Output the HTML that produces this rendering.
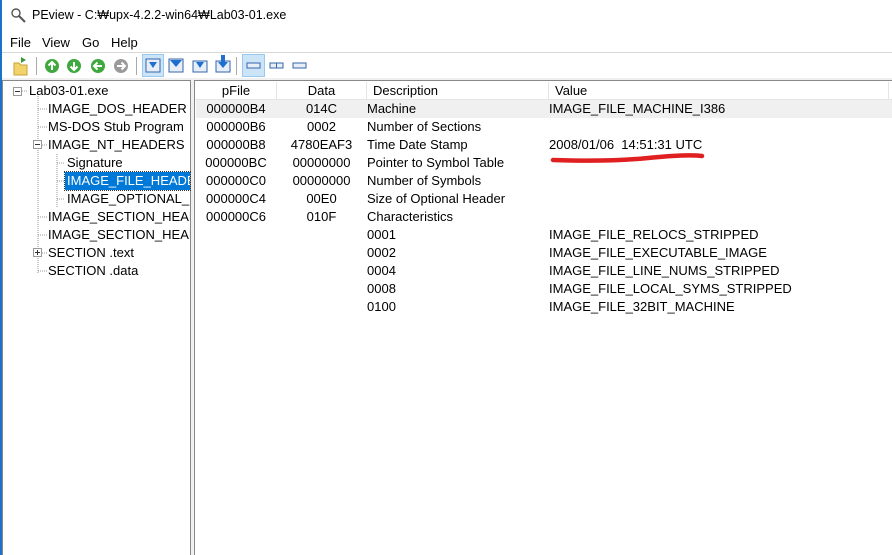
<!DOCTYPE html>
<html><head><meta charset="utf-8"><style>
*{margin:0;padding:0;box-sizing:border-box}
body{width:892px;height:555px;overflow:hidden;background:#fff;font-family:"Liberation Sans","Noto Sans CJK KR",sans-serif;font-size:13px;color:#000;position:relative}
.a{position:absolute;white-space:nowrap}
.t{line-height:18px;height:18px}
</style></head><body>
<div class="a" style="left:0;top:0;width:2px;height:555px;background:#1a73c8"></div>
<svg class="a" style="left:10px;top:7px" width="18" height="18" viewBox="0 0 18 18"><circle cx="6" cy="6" r="4" fill="none" stroke="#555" stroke-width="1.4"/><path d="M9 9l6 6" stroke="#555" stroke-width="2"/></svg>
<div class="a" style="left:32px;top:8px;font-size:12.5px">PEview - C:₩upx-4.2.2-win64₩Lab03-01.exe</div>
<div class="a" style="left:10px;top:35px">File</div>
<div class="a" style="left:42px;top:35px">View</div>
<div class="a" style="left:82px;top:35px">Go</div>
<div class="a" style="left:111px;top:35px">Help</div>
<div class="a" style="left:2px;top:52px;width:890px;height:1px;background:#d8d8d8"></div>
<svg class="a" style="left:0;top:53px" width="320" height="26">
<path d="M14 10h5l2 2h6v10h-13z" fill="#f2d36b" stroke="#c9a23b"/><path d="M21 4l5 3-5 3" fill="#3a9a3a"/>
<rect x="36" y="4" width="1" height="18" fill="#aaa"/>
<circle cx="52" cy="13" r="7" fill="#3fa83f"/><path d="M52 9v8M48.5 12.5L52 9l3.5 3.5" stroke="#fff" stroke-width="2" fill="none"/>
<circle cx="74" cy="13" r="7" fill="#3fa83f"/><path d="M74 9v8M70.5 13.5L74 17l3.5-3.5" stroke="#fff" stroke-width="2" fill="none"/>
<circle cx="98" cy="13" r="7" fill="#3fa83f"/><path d="M94 13h8M97.5 9.5L94 13l3.5 3.5" stroke="#fff" stroke-width="2" fill="none"/>
<circle cx="121" cy="13" r="7" fill="#9a9a9a"/><path d="M117 13h8M121.5 9.5L125 13l-3.5 3.5" stroke="#fff" stroke-width="2" fill="none"/>
<rect x="136" y="4" width="1" height="18" fill="#aaa"/>
<rect x="142.5" y="1.5" width="21" height="22" fill="#cce4f7" stroke="#99c9ef"/>
<rect x="146" y="6" width="14" height="13" fill="#e8eef8" stroke="#3366aa"/><path d="M149 9h8l-4 6z" fill="#1e6fd0"/>
<rect x="169" y="6" width="14" height="13" fill="#e8eef8" stroke="#3366aa"/><path d="M170 7h12l-6 7z" fill="#1e6fd0"/>
<rect x="193" y="8" width="14" height="11" fill="#e8eef8" stroke="#3366aa"/><path d="M196 9h8l-4 6z" fill="#1e6fd0"/>
<rect x="216" y="8" width="14" height="11" fill="#e8eef8" stroke="#3366aa"/><path d="M221 2h4v7h3l-5 6-5-6h3z" fill="#1e6fd0"/>
<rect x="236" y="4" width="1" height="18" fill="#aaa"/>
<rect x="242.5" y="1.5" width="22" height="22" fill="#cce4f7" stroke="#99c9ef"/>
<rect x="247" y="10" width="13" height="5" fill="#e8eef8" stroke="#3366aa"/>
<rect x="270" y="10" width="13" height="5" fill="#e8eef8" stroke="#3366aa"/><rect x="276" y="10" width="1" height="5" fill="#3366aa"/>
<rect x="293" y="10" width="13" height="5" fill="#e8eef8" stroke="#3366aa"/>
</svg>
<div class="a" style="left:2px;top:78px;width:890px;height:2px;background:#f0f0f0"></div>
<div class="a" style="left:2px;top:80px;width:188px;height:475px;border-left:1px solid #888;border-top:1px solid #888"></div>
<div class="a" style="left:190px;top:80px;width:1px;height:475px;background:#888"></div>
<div class="a" style="left:191px;top:80px;width:3px;height:475px;background:#f0f0f0"></div>
<div class="a" style="left:194px;top:80px;width:1px;height:475px;background:#888"></div>
<svg class="a" style="left:0;top:82px" width="190" height="200">
<g stroke="#999" stroke-dasharray="1,1"><path d="M20 9h8M38 12v180M38 27h9M38 45h9M38 63h9M38 135h9M38 153h9M38 171h9M38 189h9M57 72v54M57 81h8M57 99h8M57 117h8"/></g>
<rect x="13.5" y="5.5" width="8" height="8" fill="#fff" stroke="#999"/><path d="M15 9.5h5" stroke="#333"/>
<rect x="33.5" y="58.5" width="8" height="8" fill="#fff" stroke="#999"/><path d="M35 62.5h5" stroke="#333"/>
<rect x="33.5" y="166.5" width="8" height="8" fill="#fff" stroke="#999"/><path d="M35 170.5h5M37.5 168v5" stroke="#333"/>
</svg>
<div class="a t" style="left:29px;top:82px">Lab03-01.exe</div>
<div class="a t" style="left:48px;top:100px">IMAGE_DOS_HEADER</div>
<div class="a t" style="left:48px;top:118px">MS-DOS Stub Program</div>
<div class="a t" style="left:48px;top:136px">IMAGE_NT_HEADERS</div>
<div class="a t" style="left:67px;top:154px">Signature</div>
<div class="a t" style="left:65px;top:172px;width:125px;overflow:hidden;background:#0078d7;color:#fff;padding-left:2px;outline:1px dotted #333">IMAGE_FILE_HEADER</div>
<div class="a t" style="left:67px;top:190px;width:123px;overflow:hidden">IMAGE_OPTIONAL_HEADER</div>
<div class="a t" style="left:48px;top:208px;width:142px;overflow:hidden">IMAGE_SECTION_HEADER</div>
<div class="a t" style="left:48px;top:226px;width:142px;overflow:hidden">IMAGE_SECTION_HEADER</div>
<div class="a t" style="left:48px;top:244px">SECTION .text</div>
<div class="a t" style="left:48px;top:262px">SECTION .data</div>
<div class="a" style="left:195px;top:80px;width:697px;height:1px;background:#888"></div>
<div class="a" style="left:195px;top:81px;width:697px;height:19px;background:#fff;border-bottom:1px solid #e5e5e5"></div>
<div class="a" style="left:276px;top:82px;width:1px;height:18px;background:#e5e5e5"></div>
<div class="a" style="left:366px;top:82px;width:1px;height:18px;background:#e5e5e5"></div>
<div class="a" style="left:548px;top:82px;width:1px;height:18px;background:#e5e5e5"></div>
<div class="a" style="left:888px;top:82px;width:1px;height:18px;background:#e5e5e5"></div>
<div class="a t" style="left:196px;top:82px;width:80px;text-align:center">pFile</div>
<div class="a t" style="left:277px;top:82px;width:89px;text-align:center">Data</div>
<div class="a t" style="left:373px;top:82px">Description</div>
<div class="a t" style="left:555px;top:82px">Value</div>
<div class="a" style="left:196px;top:100px;width:696px;height:18px;background:#f0f0f0"></div>
<div class="a" style="left:196px;top:100px;width:80px">
<div class="t" style="text-align:center">000000B4</div><div class="t" style="text-align:center">000000B6</div><div class="t" style="text-align:center">000000B8</div><div class="t" style="text-align:center">000000BC</div><div class="t" style="text-align:center">000000C0</div><div class="t" style="text-align:center">000000C4</div><div class="t" style="text-align:center">000000C6</div></div>
<div class="a" style="left:277px;top:100px;width:89px">
<div class="t" style="text-align:center">014C</div><div class="t" style="text-align:center">0002</div><div class="t" style="text-align:center">4780EAF3</div><div class="t" style="text-align:center">00000000</div><div class="t" style="text-align:center">00000000</div><div class="t" style="text-align:center">00E0</div><div class="t" style="text-align:center">010F</div></div>
<div class="a" style="left:367px;top:100px">
<div class="t">Machine</div><div class="t">Number of Sections</div><div class="t">Time Date Stamp</div><div class="t">Pointer to Symbol Table</div><div class="t">Number of Symbols</div><div class="t">Size of Optional Header</div><div class="t">Characteristics</div><div class="t">0001</div><div class="t">0002</div><div class="t">0004</div><div class="t">0008</div><div class="t">0100</div></div>
<div class="a" style="left:549px;top:100px">
<div class="t">IMAGE_FILE_MACHINE_I386</div><div class="t"></div><div class="t">2008/01/06&nbsp;&nbsp;14:51:31 UTC</div><div class="t"></div><div class="t"></div><div class="t"></div><div class="t"></div><div class="t">IMAGE_FILE_RELOCS_STRIPPED</div><div class="t">IMAGE_FILE_EXECUTABLE_IMAGE</div><div class="t">IMAGE_FILE_LINE_NUMS_STRIPPED</div><div class="t">IMAGE_FILE_LOCAL_SYMS_STRIPPED</div><div class="t">IMAGE_FILE_32BIT_MACHINE</div></div>
<svg class="a" style="left:548px;top:150px" width="160" height="16"><path d="M5 10Q60 12 100 8T154 6" stroke="#e02020" stroke-width="4.5" fill="none" stroke-linecap="round"/></svg>
</body></html>
